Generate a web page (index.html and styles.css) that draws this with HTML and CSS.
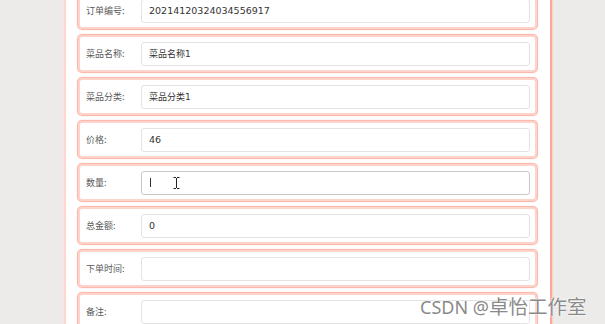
FILE: index.html
```html
<!DOCTYPE html>
<html lang="zh">
<head>
<meta charset="utf-8">
<link rel="stylesheet" href="styles.css">
</head>
<body>
<div class="page">
  <div class="panel">
    <div class="card first">
      <span class="label">订单编号:</span>
      <div class="field num">20214120324034556917</div>
    </div>
    <div class="card">
      <span class="label">菜品名称:</span>
      <div class="field">菜品名称1</div>
    </div>
    <div class="card">
      <span class="label">菜品分类:</span>
      <div class="field">菜品分类1</div>
    </div>
    <div class="card">
      <span class="label">价格:</span>
      <div class="field num">46</div>
    </div>
    <div class="card">
      <span class="label">数量:</span>
      <div class="field focus"><span class="caret"></span>
        <svg class="ibeam" width="7" height="12" viewBox="0 0 7 12"><path d="M0.5 0.5h2.5M4 0.5h2.5M3.5 1v10M0.5 11.5h2.5M4 11.5h2.5" stroke="#222" stroke-width="1" fill="none"/></svg>
      </div>
    </div>
    <div class="card">
      <span class="label">总金额:</span>
      <div class="field num">0</div>
    </div>
    <div class="card">
      <span class="label">下单时间:</span>
      <div class="field"></div>
    </div>
    <div class="card">
      <span class="label">备注:</span>
      <div class="field"></div>
    </div>
  </div>
  <div class="watermark">CSDN @<span class="wm-cjk">卓怡工作室</span></div>
</div>
</body>
</html>
```

FILE: styles.css
```css
html, body {
  margin: 0;
  padding: 0;
  height: 100%;
  overflow: hidden;
}
body {
  background: #ecebea;
  font-family: "Noto Sans CJK SC", "Noto Sans", sans-serif;
}
.page {
  position: relative;
  height: 324px;
}
.panel {
  margin-left: 64px;
  width: 488px;
  height: 400px;
  box-sizing: border-box;
  background: #fff;
  border-left: 2px solid #fcd6cf;
  border-right: 2px solid #f9a99b;
  box-shadow: 1px 0 1px #fcd3cb, -1px 0 1px #fbe3de;
  padding: 0 13px 0 12px;
  display: flex;
  flex-direction: column;
  gap: 6px;
}
.card {
  height: 33px;
  border: 2px solid #fdd3cb;
  border-radius: 4px;
  box-shadow: 0 0 1px 1px #f9b2a5;
  display: flex;
  align-items: center;
  padding: 0 5px 0 6px;
  background: #fff;
}
.card.first {
  margin-top: -8px;
}
.label {
  width: 55px;
  flex: none;
  font-size: 9px;
  color: #5a5a5a;
}
.field {
  position: relative;
  flex: 1;
  height: 22px;
  border: 1px solid #e3e3e3;
  border-radius: 3px;
  display: flex;
  align-items: center;
  padding-left: 7px;
  font-size: 9px;
  color: #333;
  font-family: "DejaVu Sans", "Noto Sans CJK SC", sans-serif;
}
.field.num {
  font-size: 9.5px;
}
.field.focus {
  border-color: #c8c8c8;
}
.caret {
  display: block;
  width: 1px;
  height: 9px;
  margin-left: 1px;
  background: #333;
}
.ibeam {
  position: absolute;
  left: 31px;
  top: 5px;
}
.watermark {
  position: absolute;
  left: 420px;
  top: 291px;
  font-family: "Noto Sans", "Noto Sans CJK SC", sans-serif;
  font-size: 18px;
  color: #8a8a8a;
  text-shadow: 0 0 2px #fff, 0 0 2px #fff;
  white-space: nowrap;
}
.wm-cjk {
  font-size: 19.5px;
}
```
